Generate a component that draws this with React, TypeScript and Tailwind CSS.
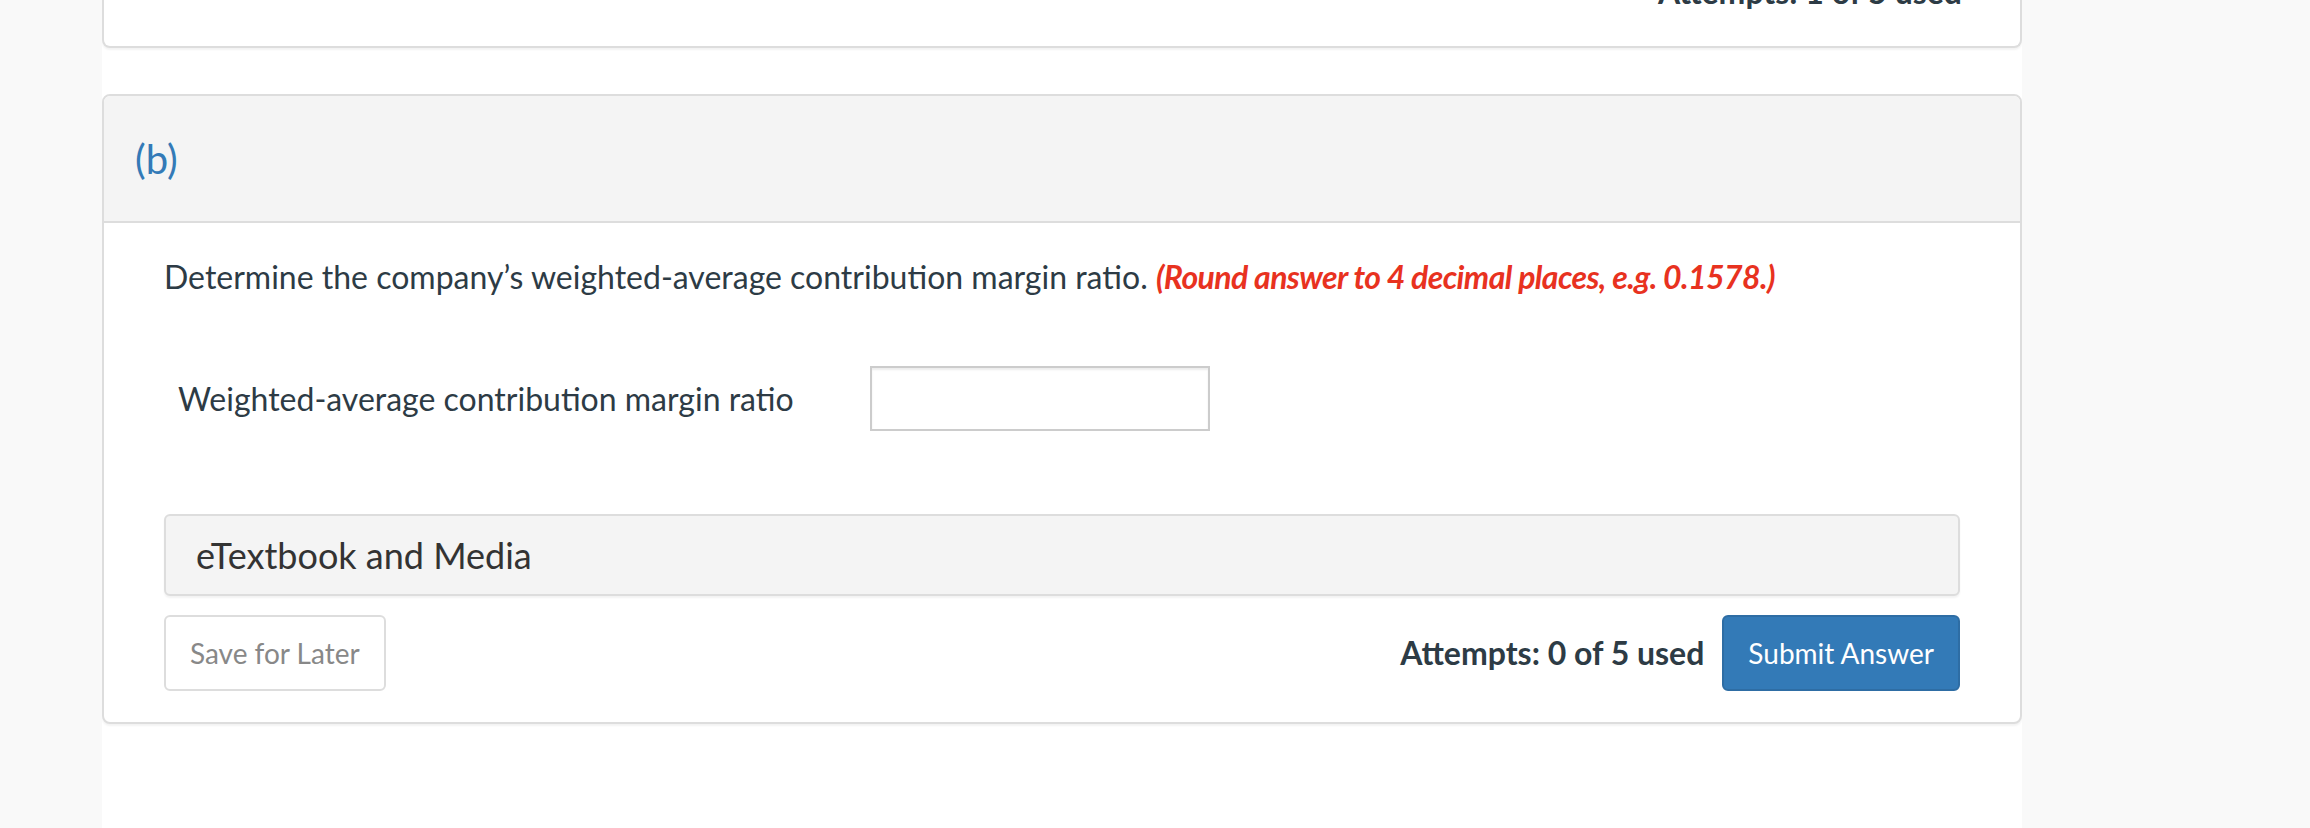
export default function App() {
  return (
    <div className="flex min-h-[828px] bg-[#f9f9f9] font-['Lato',sans-serif] text-[#2d3b45]">
      <div className="ml-[102px] w-[1920px] bg-white flex flex-col gap-[46px] overflow-hidden h-[828px]">
        {/* previous part, cut off at the top */}
        <div className="-mt-[50px] rounded-b-[8px] border-2 border-t-0 border-[#ddd] shadow-[0_2px_2px_rgba(0,0,0,0.05)] bg-white">
          <div className="flex justify-end pr-[58px] pb-[32px] pt-[20px]">
            <span className="text-[32px] font-bold leading-[44px]">Attempts: 1 of 5 used</span>
          </div>
        </div>

        {/* part (b) */}
        <div className="rounded-[8px] border-2 border-[#ddd] shadow-[0_2px_2px_rgba(0,0,0,0.05)] bg-white">
          <div className="h-[127px] flex items-center px-[31px] bg-[#f4f4f4] border-b-2 border-[#ddd] rounded-t-[6px]">
            <h3 className="text-[40px] font-normal text-[#337ab7] leading-none">(b)</h3>
          </div>

          <div className="px-[60px] pt-[30px] pb-[31px]">
            <p className="text-[32px] leading-[48px]">
              Determine the company’s weighted-average contribution margin ratio.{" "}
              <span className="font-bold italic text-[#e8321f] tracking-[-0.6px]">(Round answer to 4 decimal places, e.g. 0.1578.)</span>
            </p>

            <div className="flex items-center mt-[65px] pl-[14px]">
              <label className="w-[692px] text-[32px] leading-[48px]">Weighted-average contribution margin ratio</label>
              <input
                type="text"
                className="w-[340px] h-[65px] border-2 border-[#ccc] bg-white outline-none shadow-[inset_0_2px_2px_rgba(0,0,0,0.075)]"
              />
            </div>

            <div className="mt-[83px] h-[82px] flex items-center px-[30px] bg-[#f4f4f4] border-2 border-[#ddd] rounded-[6px] shadow-[0_2px_2px_rgba(0,0,0,0.05)]">
              <span className="text-[36px] text-[#333]">eTextbook and Media</span>
            </div>

            <div className="flex items-center mt-[19px]">
              <button className="h-[76px] px-[24px] rounded-[6px] border-2 border-[#ddd] bg-white text-[28px] text-[#888]">
                Save for Later
              </button>
              <div className="ml-auto flex items-center gap-[18px]">
                <span className="text-[32px] font-bold">Attempts: 0 of 5 used</span>
                <button className="h-[76px] px-[24px] rounded-[6px] border-2 border-[#2e6da4] bg-[#337ab7] text-[28px] text-white">
                  Submit Answer
                </button>
              </div>
            </div>
          </div>
        </div>
      </div>
    </div>
  );
}
